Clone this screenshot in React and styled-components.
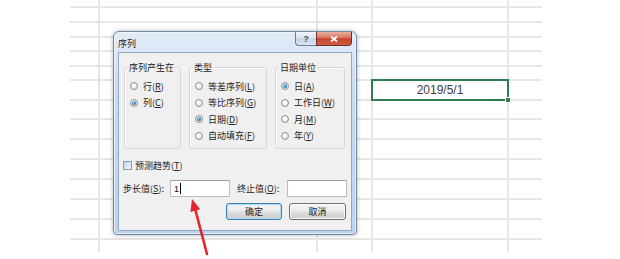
import React from 'react';
import styled, { createGlobalStyle } from 'styled-components';

const GlobalStyle = createGlobalStyle`
    html, body {
        margin: 0;
        padding: 0;
        background: #fff;
    }
    body {
        font-family: "Noto Sans CJK SC", "Liberation Sans", sans-serif;
    }
`;

const Page = styled.div`
    position: relative;
    width: 620px;
    height: 259px;
    overflow: hidden;
    box-sizing: border-box;
    padding-left: 70px;
    background: #fff;
`;

const Sheet = styled.div`
    display: grid;
    width: 472px;
    grid-template-columns: 28px 216px 53px 134px 33px;
    grid-template-rows: 6px 13px 13px 12px 13px 12px 18px 17px repeat(6, 18px) 12px;
    gap: 2px;
    background: #e6e6e6;
`;

const Cell = styled.div`
    background: #fff;
`;

const SelectedCell = styled.div`
    position: relative;
    margin: -2px;
    border: 2px solid #2f7d50;
    background: #fff;
    display: flex;
    align-items: center;
    justify-content: center;
    font: 12px "Liberation Sans", Arial, sans-serif;
    color: #3c3c3c;
`;

const FillHandle = styled.span`
    position: absolute;
    right: -4px;
    bottom: -4px;
    width: 4px;
    height: 4px;
    background: #2f7d50;
    border: 1px solid #fff;
`;

const Window = styled.div`
    position: absolute;
    left: 113px;
    top: 31px;
    width: 244px;
    height: 204px;
    box-sizing: border-box;
    display: flex;
    flex-direction: column;
    padding: 0 4px 3px;
    border: 1px solid #7088a6;
    border-radius: 6px 6px 4px 4px;
    background: linear-gradient(180deg, #e2ecf8 0%, #c9dbf0 30%, #bdd3ec 100%);
    box-shadow: 0 0 4px rgba(0, 0, 0, 0.3), inset 0 0 0 1px rgba(255, 255, 255, 0.55);
`;

const TitleBar = styled.div`
    height: 20px;
    display: flex;
    justify-content: space-between;
    align-items: flex-start;
`;

const Title = styled.span`
    margin-top: 7px;
    font-size: 9px;
    line-height: 9px;
    color: #1b1b1b;
`;

const Captions = styled.div`
    display: flex;
    height: 14px;
`;

const HelpButton = styled.div`
    width: 21px;
    box-sizing: border-box;
    border: 1px solid #6f7d90;
    border-top: none;
    border-right: none;
    border-radius: 0 0 0 4px;
    background: linear-gradient(180deg, #f0f4fa 0%, #d9e3ee 48%, #c5d3e4 52%, #d9e5f2 100%);
    display: flex;
    align-items: center;
    justify-content: center;
    font: bold 9px "Liberation Sans", sans-serif;
    color: #4a4f57;
`;

const CloseButton = styled.div`
    width: 36px;
    box-sizing: border-box;
    border: 1px solid #6e2e25;
    border-top: none;
    border-radius: 0 0 4px 0;
    background: linear-gradient(180deg, #eab0a2 0%, #d8735e 45%, #c4432c 52%, #d25d41 100%);
    display: flex;
    align-items: center;
    justify-content: center;
`;

const Client = styled.div`
    flex: 1;
    display: flex;
    flex-direction: column;
    border: 1px solid #94a8c1;
    background: #f0f0f0;
    font-size: 9px;
    line-height: 9px;
    color: #222;
`;

const Groups = styled.div`
    display: flex;
    gap: 8px;
    padding: 14px 0 0 5px;
`;

const Group = styled.div`
    width: ${p => p.$w}px;
    height: 82px;
    box-sizing: border-box;
    border: 1px solid #d6d6d6;
    border-radius: 3px;
    box-shadow: inset 1px 1px 0 #fff;
    padding-left: 5px;
`;

const GroupLabel = styled.div`
    width: fit-content;
    margin: -5px 0 0 -2px;
    padding: 0 1px;
    background: #f0f0f0;
    line-height: 9px;
`;

const RadioList = styled.div`
    margin-top: 6px;
    display: flex;
    flex-direction: column;
`;

const Option = styled.div`
    height: 16.5px;
    display: flex;
    align-items: center;
    gap: 5px;
    white-space: nowrap;
`;

const Radio = styled.span`
    position: relative;
    flex: none;
    width: 8px;
    height: 8px;
    box-sizing: border-box;
    border-radius: 50%;
    border: 1px solid #8e8f8f;
    background: radial-gradient(circle at 40% 35%, #ffffff 0%, #e6e6e6 70%, #d2d2d2 100%);

    &::after {
        content: '';
        display: ${p => (p.$checked ? 'block' : 'none')};
        position: absolute;
        left: 1px;
        top: 1px;
        width: 4px;
        height: 4px;
        border-radius: 50%;
        background: radial-gradient(circle at 40% 35%, #8fd0ff 0%, #2a7cc9 55%, #15508f 100%);
    }
`;

const CheckRow = styled.div`
    margin-top: 8px;
    height: 17px;
    padding-left: 4px;
    display: flex;
    align-items: center;
    gap: 3px;
`;

const Checkbox = styled.span`
    width: 9px;
    height: 9px;
    box-sizing: border-box;
    border: 1px solid #7f9fbf;
    background: linear-gradient(135deg, #bcd6ee 0%, #d9e8f6 60%, #eef5fc 100%);
`;

const FieldRow = styled.div`
    margin-top: 6px;
    height: 17px;
    padding-left: 4px;
    display: flex;
    align-items: center;
`;

const FieldLabel = styled.span`
    width: ${p => p.$w}px;
    margin-left: ${p => p.$gap || 0}px;
    white-space: nowrap;
`;

const Input = styled.div`
    width: 60px;
    height: 17px;
    box-sizing: border-box;
    border: 1px solid #b9bdc4;
    border-top-color: #9aa0a8;
    background: #fff;
    display: flex;
    align-items: center;
    padding-left: 3px;
    font: 9px "Liberation Sans", sans-serif;
    color: #111;
`;

const Caret = styled.span`
    width: 1px;
    height: 11px;
    margin-left: 1px;
    background: #000;
`;

const ButtonRow = styled.div`
    margin-top: 6px;
    display: flex;
    justify-content: flex-end;
    gap: 7px;
    padding-right: 5px;
`;

const Button = styled.div`
    width: ${p => p.$w}px;
    height: 17px;
    box-sizing: border-box;
    border: 1px solid ${p => (p.$default ? '#3c7fb1' : '#707070')};
    border-radius: 3px;
    background: linear-gradient(180deg, #f4f4f4 0%, #ebebeb 48%, #dddddd 52%, #cfcfcf 100%);
    box-shadow: ${p => (p.$default ? 'inset 0 0 0 1px #a6dcf6' : 'inset 0 0 0 1px #fbfbfb')};
    display: flex;
    align-items: center;
    justify-content: center;
`;

const Arrow = styled.svg`
    position: absolute;
    left: 180px;
    top: 195px;
    width: 35px;
    height: 64px;
    overflow: visible;
`;

const rowCount = 15;
const colCount = 5;

const Opt = ({ checked, text, keyChar }) => (
    <Option>
        <Radio $checked={checked} />
        <span>
            {text}(<u>{keyChar}</u>)
        </span>
    </Option>
);

export default function App() {
    const cells = [];
    for (let r = 0; r < rowCount; r++) {
        for (let c = 0; c < colCount; c++) {
            if (r === 6 && c === 3) {
                cells.push(
                    <SelectedCell key={`${r}-${c}`}>
                        2019/5/1
                        <FillHandle />
                    </SelectedCell>
                );
            } else {
                cells.push(<Cell key={`${r}-${c}`} />);
            }
        }
    }

    return (
        <Page>
            <GlobalStyle />
            <Sheet>{cells}</Sheet>

            <Window>
                <TitleBar>
                    <Title>序列</Title>
                    <Captions>
                        <HelpButton>?</HelpButton>
                        <CloseButton>
                            <svg width="8" height="6" viewBox="0 0 8 6">
                                <path d="M1 0.5 L7 5.5 M7 0.5 L1 5.5" stroke="#fff" strokeWidth="1.8" />
                            </svg>
                        </CloseButton>
                    </Captions>
                </TitleBar>
                <Client>
                    <Groups>
                        <Group $w={57}>
                            <GroupLabel>序列产生在</GroupLabel>
                            <RadioList>
                                <Opt text="行" keyChar="R" />
                                <Opt text="列" keyChar="C" checked />
                            </RadioList>
                        </Group>
                        <Group $w={78}>
                            <GroupLabel>类型</GroupLabel>
                            <RadioList>
                                <Opt text="等差序列" keyChar="L" />
                                <Opt text="等比序列" keyChar="G" />
                                <Opt text="日期" keyChar="D" checked />
                                <Opt text="自动填充" keyChar="F" />
                            </RadioList>
                        </Group>
                        <Group $w={70}>
                            <GroupLabel>日期单位</GroupLabel>
                            <RadioList>
                                <Opt text="日" keyChar="A" checked />
                                <Opt text="工作日" keyChar="W" />
                                <Opt text="月" keyChar="M" />
                                <Opt text="年" keyChar="Y" />
                            </RadioList>
                        </Group>
                    </Groups>
                    <CheckRow>
                        <Checkbox />
                        <span>
                            预测趋势(<u>T</u>)
                        </span>
                    </CheckRow>
                    <FieldRow>
                        <FieldLabel $w={47}>
                            步长值(<u>S</u>):
                        </FieldLabel>
                        <Input>
                            1<Caret />
                        </Input>
                        <FieldLabel $w={50} $gap={7}>
                            终止值(<u>O</u>):
                        </FieldLabel>
                        <Input />
                    </FieldRow>
                    <ButtonRow>
                        <Button $w={56} $default>
                            确定
                        </Button>
                        <Button $w={57}>取消</Button>
                    </ButtonRow>
                </Client>
            </Window>

            <Arrow viewBox="0 0 35 64">
                <line x1="27" y1="59" x2="15.4" y2="15" stroke="#e8232b" strokeWidth="2.6" strokeLinecap="round" />
                <polygon points="12,4 20.2,14.3 10.4,16.9" fill="#e8232b" />
            </Arrow>
        </Page>
    );
}
